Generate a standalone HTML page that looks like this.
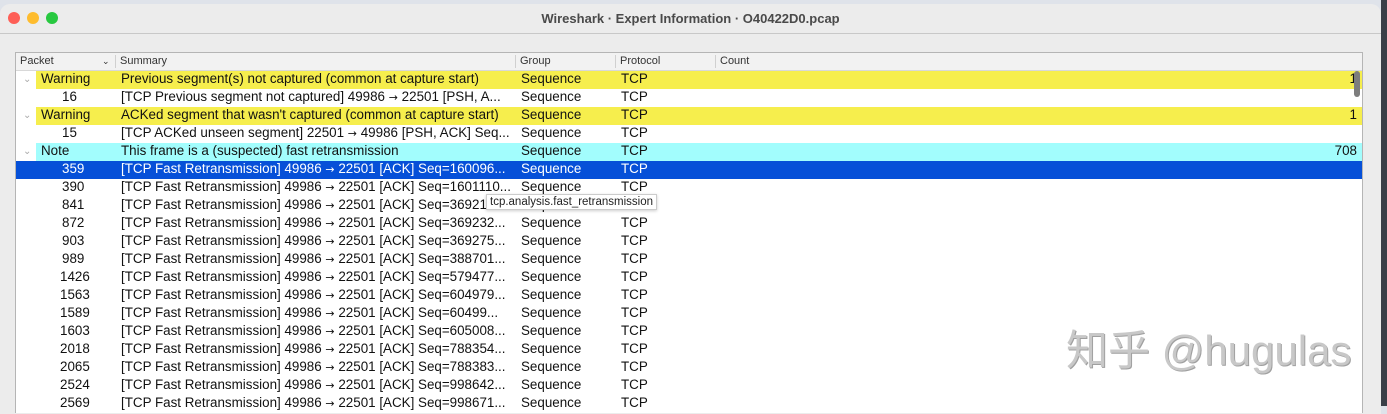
<!DOCTYPE html><html><head><style>
body{margin:0;width:1387px;height:406px;overflow:hidden;background:#dfe3ea;font-family:"Liberation Sans",Arial,sans-serif;position:relative}
.win{position:absolute;left:0;top:4px;width:1381px;height:410px;background:#ececec;border-radius:10px 10px 0 0;overflow:hidden}
.rs{position:absolute;left:1381px;top:0;width:6px;height:406px;background:#3a3f48}
.title{height:29px;border-bottom:1px solid #c8c8c8;text-align:center;font-size:13px;font-weight:bold;color:#4a4a4a;line-height:29px}
.dot{position:absolute;top:8px;width:12px;height:12px;border-radius:50%}
.tbl{position:absolute;left:15px;top:48px;width:1346px;height:360px;background:#fff;border:1px solid #b5b5b5;border-bottom:none}
.hd{height:17px;background:#f2f2f2;border-bottom:1px solid #d8d8d8;font-size:11px;color:#333;position:relative}
.hd span{position:absolute;top:2px}
.hd i{position:absolute;top:2px;width:1px;height:13px;background:#d0d0d0}
.r{height:18px;position:relative;font-size:13.4px;color:#111;white-space:nowrap}
.r span{position:absolute;top:0px}
.y{background:linear-gradient(to right,#fff 20px,#f6ee4d 20px)}
.c{background:linear-gradient(to right,#fff 20px,#a2fdfd 20px)}
.s{background:#0650d8;color:#fff}
.ar{left:7px;color:#aaa;font-size:10px;top:3px!important}
</style></head><body>
<div class="rs"></div>
<div class="win">
<div class="dot" style="left:8px;background:#fe5f57"></div>
<div class="dot" style="left:27px;background:#febc2e"></div>
<div class="dot" style="left:46px;background:#28c840"></div>
<div class="title">Wireshark · Expert Information · O40422D0.pcap</div>
<div class="tbl">
<div class="hd"><span style="left:4px">Packet</span><span style="left:86px;font-size:9px;top:3px">⌄</span><i style="left:99px"></i><span style="left:104px">Summary</span><i style="left:499px"></i><span style="left:504px">Group</span><i style="left:599px"></i><span style="left:604px">Protocol</span><i style="left:699px"></i><span style="left:704px">Count</span></div>
<div id="rows"></div>
<div style="position:absolute;left:1338px;top:18px;width:6px;height:26px;border-radius:3px;background:#7d7d7d"></div>
</div>
<div style="position:absolute;left:486px;top:190px;background:#fff;border:1px solid #ccc;font-size:11.5px;padding:1px 3px;color:#222;box-shadow:0 1px 3px rgba(0,0,0,.2)">tcp.analysis.fast_retransmission</div>
<div style="position:absolute;left:1066px;top:313px;font-size:42px;white-space:nowrap;color:#c8c8c8;font-family:'Liberation Sans','Noto Sans CJK SC',sans-serif;text-shadow:1px 1px 0 #a0a0a0">知乎 @hugulas</div>
</div>
<script>
var d=[["y","Warning","Previous segment(s) not captured (common at capture start)","1",1],
["","16","[TCP Previous segment not captured] 49986 → 22501 [PSH, A...",""],
["y","Warning","ACKed segment that wasn't captured (common at capture start)","1",1],
["","15","[TCP ACKed unseen segment] 22501 → 49986 [PSH, ACK] Seq...",""],
["c","Note","This frame is a (suspected) fast retransmission","708",1]];
var f=[["359","160096..."],["390","1601110..."],["841","36921"],["872","369232..."],["903","369275..."],["989","388701..."],["1426","579477..."],["1563","604979..."],["1589","60499..."],["1603","605008..."],["2018","788354..."],["2065","788383..."],["2524","998642..."],["2569","998671..."]];
f.forEach(function(x,i){d.push([i==0?"s":"",x[0],"[TCP Fast Retransmission] 49986 → 22501 [ACK] Seq="+x[1],""])});
var h="";d.forEach(function(r){var p=r[4]?'<span class="ar">⌄</span><span style="left:25px">'+r[1]+'</span>':'<span style="left:'+(r[1].length>3?44:46)+'px">'+r[1]+'</span>';
h+='<div class="r '+r[0]+'">'+p+'<span style="left:105px">'+r[2].replace('→','<b style="font-weight:normal;font-family:DejaVu Sans;font-size:11px">→</b>')+'</span><span style="left:505px">Sequence</span><span style="left:605px">TCP</span>'+(r[3]?'<span style="right:5px">'+r[3]+'</span>':'')+'</div>'});
document.getElementById("rows").innerHTML=h;
</script>
</body></html>
